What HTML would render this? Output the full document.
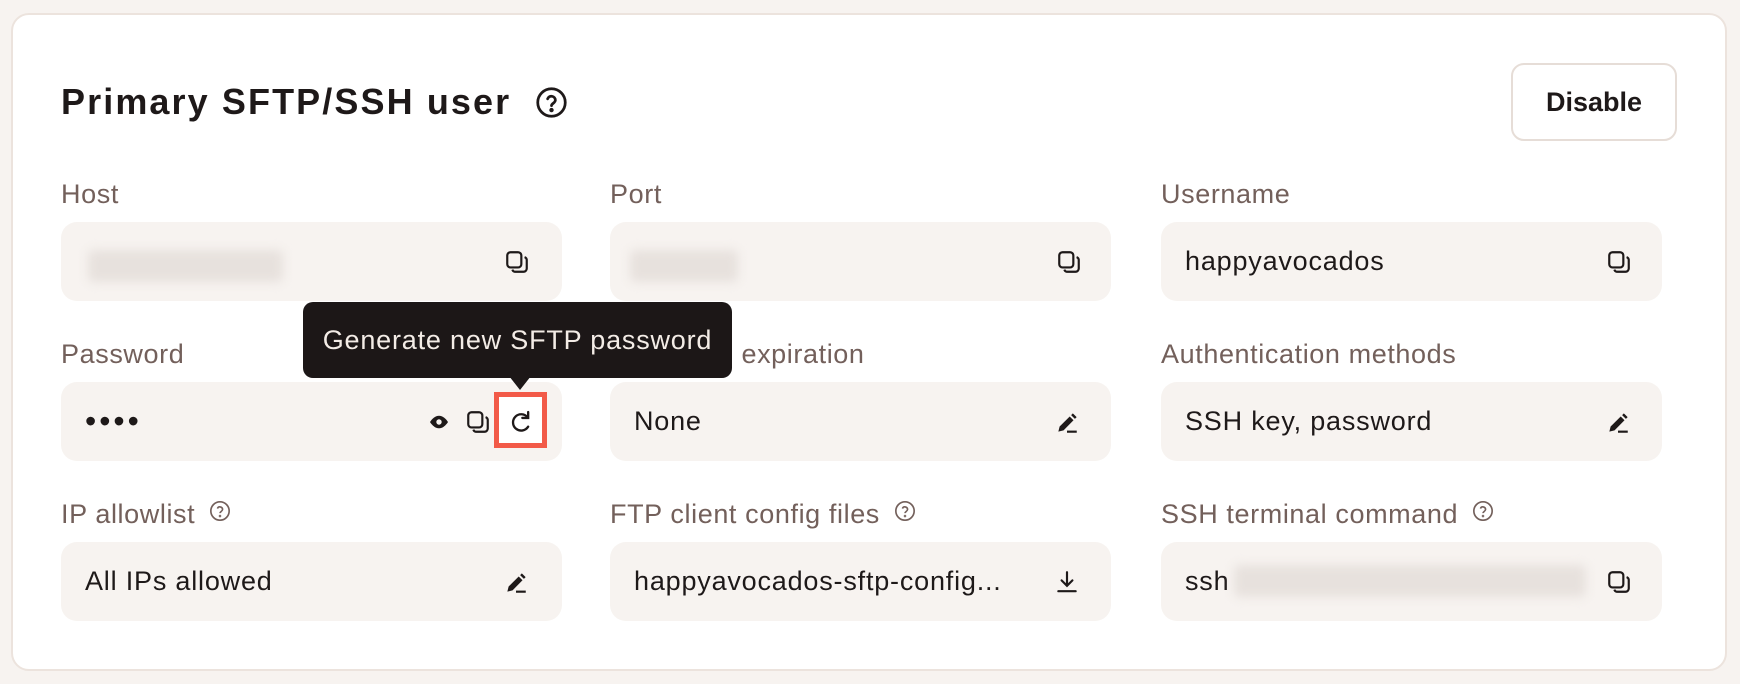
<!DOCTYPE html>
<html><head><meta charset="utf-8"><style>
*{box-sizing:border-box;margin:0;padding:0}
body{width:1740px;height:684px;background:#f7f3f0;font-family:"Liberation Sans",sans-serif;position:relative;overflow:hidden;color:#1e1919}
.card{position:absolute;left:11px;top:13px;width:1716px;height:658px;background:#fff;border:2px solid #ece3dd;border-radius:18px}
.abs{position:absolute}
h1{position:absolute;left:61px;top:80px;font-size:36px;font-weight:600;letter-spacing:2.1px;line-height:44px}
.btn{position:absolute;left:1511px;top:63px;width:166px;height:78px;border:2px solid #e6ddd7;border-radius:13px;font-size:27px;font-weight:600;display:flex;align-items:center;justify-content:center}
.lab{position:absolute;font-size:27px;color:#73605b;line-height:30px;letter-spacing:0.6px;display:flex;align-items:center;white-space:nowrap}
.lab svg{margin-left:14px;margin-top:-6px}
.f{position:absolute;width:501px;height:79px;background:#f7f3f0;border-radius:16px;font-size:27px;letter-spacing:0.8px;line-height:79px;padding-left:24px}
.ic{position:absolute}
.blur{position:absolute;background:#e7e1dd;filter:blur(5px);border-radius:6px}
.tip{position:absolute;left:303px;top:302px;width:429px;height:76px;background:#1c1717;border-radius:10px;color:#f3ece6;font-size:27px;letter-spacing:0.8px;line-height:76px;text-align:center}
</style></head><body>
<div class="card"></div>
<h1>Primary SFTP/SSH user</h1>
<svg class="ic" style="left:535px;top:86px" width="33" height="33" viewBox="0 0 24 24" fill="none" stroke="#1e1919" stroke-width="2"><circle cx="12" cy="12" r="10"/><path d="M9.2 9.3a2.9 2.9 0 0 1 5.6 1c0 2-2.8 2.4-2.8 4" stroke-linecap="round"/><circle cx="12" cy="17.5" r=".6" fill="#1e1919"/></svg>
<div class="btn">Disable</div>

<div class="lab" style="left:61px;top:179px">Host</div>
<div class="lab" style="left:610px;top:179px">Port</div>
<div class="lab" style="left:1161px;top:179px">Username</div>
<div class="f" style="left:61px;top:222px"></div>
<div class="f" style="left:610px;top:222px"></div>
<div class="f" style="left:1161px;top:222px">happyavocados</div>
<div class="blur" style="left:88px;top:250px;width:195px;height:32px"></div>
<div class="blur" style="left:630px;top:250px;width:108px;height:32px"></div>

<div class="lab" style="left:61px;top:339px">Password</div>
<div class="lab" style="left:610px;top:339px">Password expiration</div>
<div class="lab" style="left:1161px;top:339px">Authentication methods</div>
<div class="f" style="left:61px;top:382px;font-size:32px;letter-spacing:3px">&#8226;&#8226;&#8226;&#8226;</div>
<div class="f" style="left:610px;top:382px">None</div>
<div class="f" style="left:1161px;top:382px">SSH key, password</div>

<div class="lab" style="left:61px;top:499px">IP allowlist<svg width="22" height="22" viewBox="0 0 24 24" fill="none" stroke="#73605b" stroke-width="1.8"><circle cx="12" cy="12" r="10"/><path d="M9.2 9.3a2.9 2.9 0 0 1 5.6 1c0 2-2.8 2.4-2.8 4"/><circle cx="12" cy="17.5" r=".5"/></svg></div>
<div class="lab" style="left:610px;top:499px">FTP client config files<svg width="22" height="22" viewBox="0 0 24 24" fill="none" stroke="#73605b" stroke-width="1.8"><circle cx="12" cy="12" r="10"/><path d="M9.2 9.3a2.9 2.9 0 0 1 5.6 1c0 2-2.8 2.4-2.8 4"/><circle cx="12" cy="17.5" r=".5"/></svg></div>
<div class="lab" style="left:1161px;top:499px">SSH terminal command<svg width="22" height="22" viewBox="0 0 24 24" fill="none" stroke="#73605b" stroke-width="1.8"><circle cx="12" cy="12" r="10"/><path d="M9.2 9.3a2.9 2.9 0 0 1 5.6 1c0 2-2.8 2.4-2.8 4"/><circle cx="12" cy="17.5" r=".5"/></svg></div>
<div class="f" style="left:61px;top:542px">All IPs allowed</div>
<div class="f" style="left:610px;top:542px">happyavocados-sftp-config...</div>
<div class="f" style="left:1161px;top:542px">ssh</div>
<div class="blur" style="left:1234px;top:565px;width:352px;height:32px"></div>

<svg class="ic" style="left:504px;top:249px" width="26" height="26" viewBox="0 0 24 24" fill="none" stroke="#1e1919" stroke-width="2"><rect x="3" y="3" width="13" height="14" rx="3"/><path d="M19 7.5a3 3 0 0 1 2 2.8V18a3 3 0 0 1-3 3h-7.5a3 3 0 0 1-2.8-2"/></svg>
<svg class="ic" style="left:1056px;top:249px" width="26" height="26" viewBox="0 0 24 24" fill="none" stroke="#1e1919" stroke-width="2"><rect x="3" y="3" width="13" height="14" rx="3"/><path d="M19 7.5a3 3 0 0 1 2 2.8V18a3 3 0 0 1-3 3h-7.5a3 3 0 0 1-2.8-2"/></svg>
<svg class="ic" style="left:1606px;top:249px" width="26" height="26" viewBox="0 0 24 24" fill="none" stroke="#1e1919" stroke-width="2"><rect x="3" y="3" width="13" height="14" rx="3"/><path d="M19 7.5a3 3 0 0 1 2 2.8V18a3 3 0 0 1-3 3h-7.5a3 3 0 0 1-2.8-2"/></svg>
<svg class="ic" style="left:1606px;top:569px" width="26" height="26" viewBox="0 0 24 24" fill="none" stroke="#1e1919" stroke-width="2"><rect x="3" y="3" width="13" height="14" rx="3"/><path d="M19 7.5a3 3 0 0 1 2 2.8V18a3 3 0 0 1-3 3h-7.5a3 3 0 0 1-2.8-2"/></svg>

<svg class="ic" style="left:428px;top:413px" width="22" height="18" viewBox="0 0 24 20" fill="#1e1919"><path d="M12 3C6 3 2 10 2 10s4 7 10 7 10-7 10-7-4-7-10-7z"/><circle cx="12" cy="10" r="3" fill="#f7f3f0"/></svg>
<svg class="ic" style="left:465px;top:409px" width="26" height="26" viewBox="0 0 24 24" fill="none" stroke="#1e1919" stroke-width="2"><rect x="3" y="3" width="13" height="14" rx="3"/><path d="M19 7.5a3 3 0 0 1 2 2.8V18a3 3 0 0 1-3 3h-7.5a3 3 0 0 1-2.8-2"/></svg>
<div class="abs" style="left:494px;top:392px;width:53px;height:56px;border:5px solid #f25a48;background:#fff"></div>
<svg class="ic" style="left:506px;top:408px" width="28" height="28" viewBox="0 0 24 24" fill="none" stroke="#1e1919" stroke-width="2" stroke-linecap="round"><path d="M18.5 8A7 7 0 1 0 19 16"/><path d="M19 3.5v5h-5"/></svg>

<svg class="ic" style="left:1054px;top:410px" width="26" height="26" viewBox="0 0 24 24" fill="#1e1919"><path d="M4 20l1.2-4.8L14.5 6l3.5 3.5-9.2 9.3z"/><path d="M15.8 4.7l1.6-1.6 3.5 3.5-1.6 1.6z"/><rect x="12" y="19" width="9" height="2"/></svg>
<svg class="ic" style="left:1605px;top:410px" width="26" height="26" viewBox="0 0 24 24" fill="#1e1919"><path d="M4 20l1.2-4.8L14.5 6l3.5 3.5-9.2 9.3z"/><path d="M15.8 4.7l1.6-1.6 3.5 3.5-1.6 1.6z"/><rect x="12" y="19" width="9" height="2"/></svg>
<svg class="ic" style="left:503px;top:570px" width="26" height="26" viewBox="0 0 24 24" fill="#1e1919"><path d="M4 20l1.2-4.8L14.5 6l3.5 3.5-9.2 9.3z"/><path d="M15.8 4.7l1.6-1.6 3.5 3.5-1.6 1.6z"/><rect x="12" y="19" width="9" height="2"/></svg>
<svg class="ic" style="left:1054px;top:569px" width="26" height="26" viewBox="0 0 24 24" fill="none" stroke="#1e1919" stroke-width="2" stroke-linecap="round"><path d="M12 3v12M7 10.5l5 5 5-5M4 20.5h16"/></svg>

<div class="tip">Generate new SFTP password</div>
<div class="abs" style="left:509px;top:376px;width:0;height:0;border-left:11px solid transparent;border-right:11px solid transparent;border-top:14px solid #1c1717"></div>
</body></html>
